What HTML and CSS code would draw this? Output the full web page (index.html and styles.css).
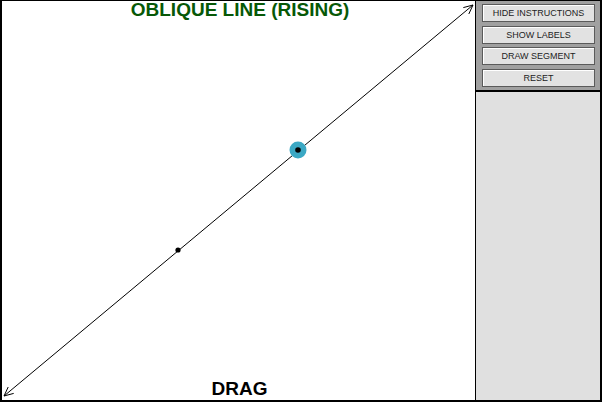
FILE: index.html
```html
<!DOCTYPE html>
<html>
<head>
<meta charset="utf-8">
<link rel="stylesheet" href="styles.css">
</head>
<body>
<div class="app">
  <div class="canvas">
    <svg class="board" width="473" height="399" viewBox="0 0 473 399">
      <line x1="2" y1="395" x2="471" y2="4" stroke="#000" stroke-width="1"/>
      <polyline points="461.3,6.6 471,4 466.8,13" fill="none" stroke="#000" stroke-width="1"/>
      <polyline points="11.7,392.4 2,395 6.2,386" fill="none" stroke="#000" stroke-width="1"/>
      <circle cx="176" cy="249" r="2.6" fill="#000"/>
      <circle cx="296" cy="149" r="8.5" fill="#3ba8c4"/>
      <circle cx="296" cy="149" r="2.8" fill="#000"/>
    </svg>
    <div class="title">OBLIQUE LINE (RISING)</div>
    <div class="drag">DRAG</div>
  </div>
  <div class="panel">
    <div class="controls">
      <button class="btn">HIDE INSTRUCTIONS</button>
      <button class="btn">SHOW LABELS</button>
      <button class="btn">DRAW SEGMENT</button>
      <button class="btn">RESET</button>
    </div>
    <div class="info"></div>
  </div>
</div>
</body>
</html>
```
FILE: styles.css
```css
html, body {
  margin: 0;
  padding: 0;
  background: #fff;
}
.app {
  width: 602px;
  height: 402px;
  box-sizing: border-box;
  border-style: solid;
  border-color: #000;
  border-width: 1px 2px 2px 2px;
  display: flex;
  font-family: "Liberation Sans", Arial, sans-serif;
}
.canvas {
  position: relative;
  width: 473px;
  border-right: 1px solid #000;
  display: flex;
  flex-direction: column;
  justify-content: space-between;
  background: #fff;
}
.board {
  position: absolute;
  left: 0;
  top: 0;
  display: block;
}
.title {
  position: relative;
  font-size: 19px;
  font-weight: bold;
  line-height: 18px;
  color: #075807;
  text-align: center;
  padding-left: 3px;
}
.drag {
  position: relative;
  font-size: 19px;
  font-weight: bold;
  line-height: 18px;
  color: #000;
  text-align: center;
  padding-left: 2px;
  padding-bottom: 2px;
}
.panel {
  flex: 1;
  display: flex;
  flex-direction: column;
  background: #e0e0e0;
}
.controls {
  background: #a0a0a0;
  border-bottom: 2px solid #000;
  padding: 3px 5px 3px 6px;
  display: flex;
  flex-direction: column;
  gap: 3.67px;
}
.btn {
  height: 18px;
  margin: 0;
  padding: 0;
  box-sizing: border-box;
  background: #e2e2e2;
  border: 1px solid #5a5a5a;
  box-shadow: inset 1px 1px 0 #fff;
  font-family: "Liberation Sans", Arial, sans-serif;
  font-size: 9px;
  color: #222;
  text-align: center;
  line-height: 16px;
}
.info {
  flex: 1;
}
```
